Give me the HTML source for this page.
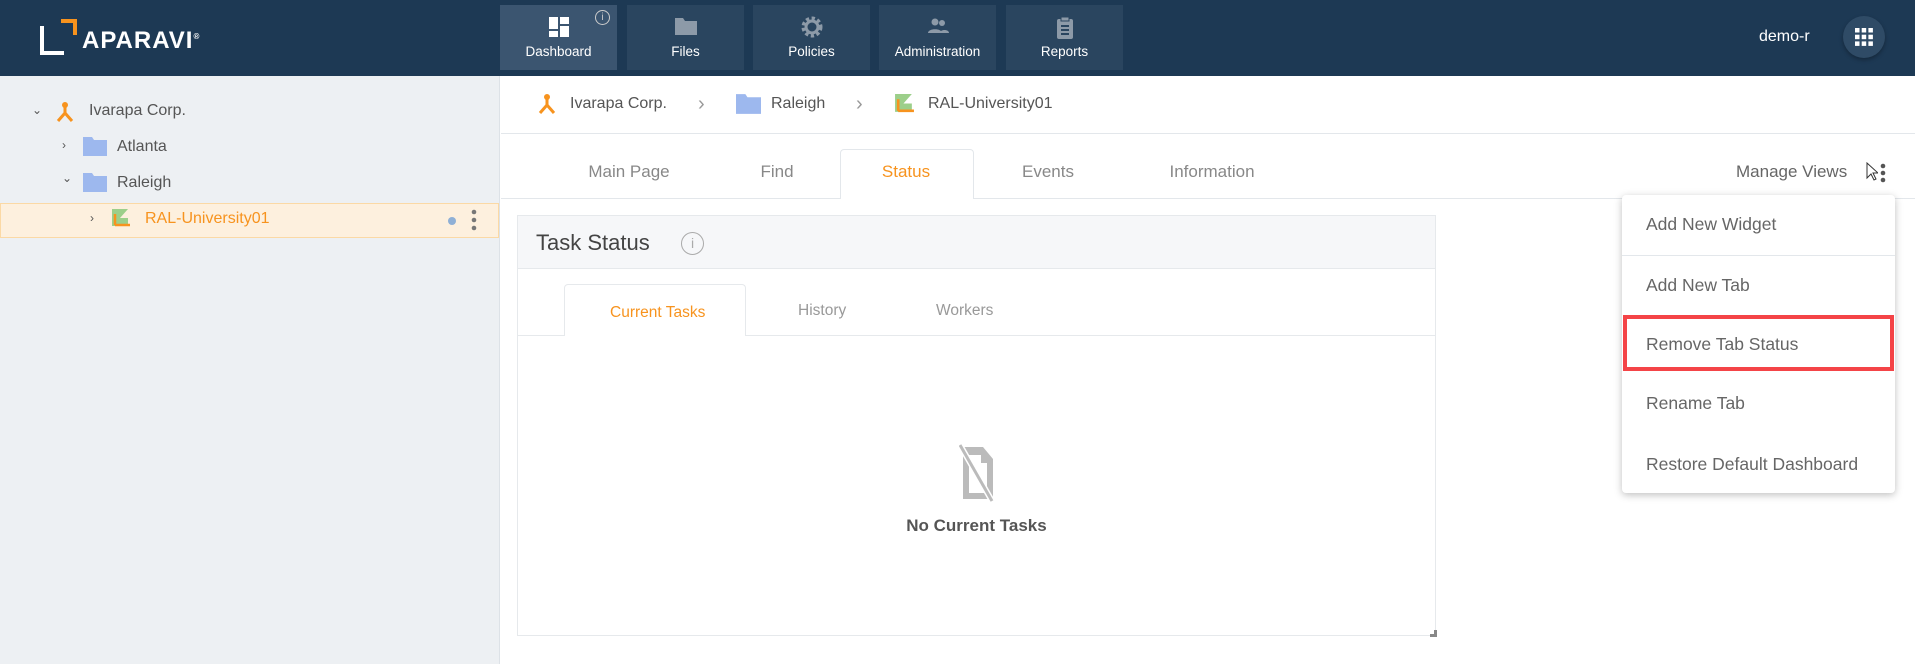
<!DOCTYPE html>
<html><head><meta charset="utf-8"><style>
*{margin:0;padding:0;box-sizing:border-box}
body{width:1915px;height:664px;overflow:hidden;background:#fff;font-family:"Liberation Sans",sans-serif;position:relative;color:#555}
.abs{position:absolute}
#hdr{left:0;top:0;width:1915px;height:76px;background:#1d3954}
.nb{position:absolute;top:5px;height:65px;width:117px;background:#2a455f;color:#fff;font-size:13.5px;text-align:center}
.nb span{position:absolute;left:0;right:0;top:39px}
.nb svg{position:absolute;left:50%;top:11px;transform:translateX(-50%)}
#side{left:0;top:76px;width:500px;height:588px;background:#edf0f3;border-right:1px solid #dde2e7}
.t{position:absolute;font-size:16px;color:#555;white-space:nowrap}
.chev{position:absolute;font-size:12px;color:#555}
.tab{position:absolute;font-size:17px;color:#888;top:162px;transform:translateX(-50%)}
.mi{position:absolute;left:24px;font-size:17.5px;color:#666;white-space:nowrap}
</style></head><body>
<div id="hdr" class="abs">
  <svg class="abs" style="left:39px;top:18px" width="40" height="38" viewBox="0 0 40 38"><path d="M3 8v27h22" fill="none" stroke="#fff" stroke-width="4"/><path d="M22 3h14v14" fill="none" stroke="#f7931e" stroke-width="4"/></svg>
  <div class="abs" style="left:82px;top:27px;color:#fff;font-size:24px;font-weight:bold;letter-spacing:1px">APARAVI<sup style="font-size:8px">®</sup></div>
  <div class="nb" style="left:500px;background:#3b5570"><svg width="22" height="22" viewBox="0 0 22 22"><rect x="1" y="1" width="9" height="12" fill="#fff"/><rect x="12" y="1" width="9" height="7" fill="#fff"/><rect x="12" y="10" width="9" height="11" fill="#fff"/><rect x="1" y="15" width="9" height="6" fill="#fff"/></svg><div class="abs" style="right:7px;top:5px;width:15px;height:15px;border:1.3px solid #ccc;border-radius:50%;font-size:10px;line-height:13px;color:#ccc">i</div><span>Dashboard</span></div>
  <div class="nb" style="left:627px"><svg width="24" height="20" viewBox="0 0 24 20"><path d="M1 2h8l2 3h12v14H1z" fill="#8d9aa8"/></svg><span>Files</span></div>
  <div class="nb" style="left:753px"><svg width="22" height="22" viewBox="0 0 22 22"><circle cx="11" cy="11" r="8" fill="none" stroke="#8d9aa8" stroke-width="5" stroke-dasharray="3 2.3"/><circle cx="11" cy="11" r="6" fill="none" stroke="#8d9aa8" stroke-width="3"/></svg><span>Policies</span></div>
  <div class="nb" style="left:879px"><svg width="24" height="20" viewBox="0 0 24 20"><circle cx="9" cy="6" r="3.5" fill="#8d9aa8"/><circle cx="16" cy="7" r="3" fill="#8d9aa8"/><path d="M2 17c0-5 14-5 14 0zM14 17c0-4 9-4 9 0z" fill="#8d9aa8"/></svg><span>Administration</span></div>
  <div class="nb" style="left:1006px"><svg width="20" height="24" viewBox="0 0 20 24"><rect x="2" y="3" width="16" height="20" rx="2" fill="#8d9aa8"/><rect x="6" y="1" width="8" height="4" fill="#8d9aa8" stroke="#2a455f"/><path d="M6 10h8M6 14h8M6 18h8" stroke="#2a455f" stroke-width="2"/></svg><span>Reports</span></div>
  <div class="abs" style="left:1759px;top:28px;color:#fff;font-size:16px">demo-r</div>
  <div class="abs" style="left:1843px;top:16px;width:42px;height:42px;border-radius:50%;background:#2f4b66;box-shadow:0 2px 4px rgba(0,0,0,.3)"><svg class="abs" style="left:12px;top:12px" width="18" height="18" viewBox="0 0 18 18" fill="#fff"><rect x="0" y="0" width="4.5" height="4.5"/><rect x="6.7" y="0" width="4.5" height="4.5"/><rect x="13.4" y="0" width="4.5" height="4.5"/><rect x="0" y="6.7" width="4.5" height="4.5"/><rect x="6.7" y="6.7" width="4.5" height="4.5"/><rect x="13.4" y="6.7" width="4.5" height="4.5"/><rect x="0" y="13.4" width="4.5" height="4.5"/><rect x="6.7" y="13.4" width="4.5" height="4.5"/><rect x="13.4" y="13.4" width="4.5" height="4.5"/></svg></div>
</div>
<div id="side" class="abs">
  <div class="chev" style="left:32px;top:27px">&#8964;</div>
  <svg class="abs" style="left:55px;top:25px" width="20" height="22" viewBox="0 0 20 22"><circle cx="10" cy="4" r="3" fill="#f7931e"/><path d="M10 5v7L3 20M10 12l7 8" stroke="#f7931e" stroke-width="3" fill="none"/></svg>
  <div class="t" style="left:89px;top:26px">Ivarapa Corp.</div>
  <div class="chev" style="left:62px;top:62px">&#8250;</div>
  <svg class="abs" style="left:83px;top:60px" width="24" height="20" viewBox="0 0 24 20"><path d="M0 1h9l2 3h13v16H0z" fill="#9db8ee"/></svg>
  <div class="t" style="left:117px;top:62px">Atlanta</div>
  <div class="chev" style="left:62px;top:95px">&#8964;</div>
  <svg class="abs" style="left:83px;top:96px" width="24" height="20" viewBox="0 0 24 20"><path d="M0 1h9l2 3h13v16H0z" fill="#9db8ee"/></svg>
  <div class="t" style="left:117px;top:98px">Raleigh</div>
  <div class="abs" style="left:0;top:127px;width:499px;height:35px;background:#fdf0de;border:1px solid #fbd9a5"></div>
  <div class="chev" style="left:90px;top:135px">&#8250;</div>
  <svg class="abs" style="left:111px;top:132px" width="20" height="20" viewBox="0 0 20 20"><path d="M1 1h16l-8 9 8 0v8H1z" fill="#9ccf8a"/><path d="M4 17h15M4 6v11" stroke="#f7931e" stroke-width="2.5"/></svg>
  <div class="t" style="left:145px;top:134px;color:#f7931e">RAL-University01</div>
  <div class="abs" style="left:448px;top:141px;width:8px;height:8px;border-radius:50%;background:#8fb0d6"></div>
  <svg class="abs" style="left:471px;top:133px" width="6" height="22"><circle cx="3" cy="3" r="2.3" fill="#777"/><circle cx="3" cy="11" r="2.3" fill="#777"/><circle cx="3" cy="19" r="2.3" fill="#777"/></svg>
</div>
<svg class="abs" style="left:537px;top:92px" width="20" height="24" viewBox="0 0 20 22"><circle cx="10" cy="4" r="3" fill="#f7931e"/><path d="M10 5v7L3 20M10 12l7 8" stroke="#f7931e" stroke-width="3" fill="none"/></svg>
<div class="t" style="left:570px;top:95px">Ivarapa Corp.</div>
<div class="t" style="left:698px;top:93px;color:#999;font-size:20px">&#8250;</div>
<svg class="abs" style="left:736px;top:93px" width="25" height="21" viewBox="0 0 24 20"><path d="M0 1h9l2 3h13v16H0z" fill="#9db8ee"/></svg>
<div class="t" style="left:771px;top:95px">Raleigh</div>
<div class="t" style="left:856px;top:93px;color:#999;font-size:20px">&#8250;</div>
<svg class="abs" style="left:894px;top:93px" width="21" height="21" viewBox="0 0 20 20"><path d="M1 1h16l-8 9 8 0v8H1z" fill="#9ccf8a"/><path d="M4 17h15M4 6v11" stroke="#f7931e" stroke-width="2.5"/></svg>
<div class="t" style="left:928px;top:95px">RAL-University01</div>
<div class="abs" style="left:501px;top:133px;width:1414px;height:1px;background:#e3e7eb"></div>
<div class="abs" style="left:840px;top:149px;width:134px;height:50px;background:#fff;border:1px solid #e3e7eb;border-bottom:none;border-radius:4px 4px 0 0;z-index:2"></div>
<div class="abs" style="left:501px;top:198px;width:1414px;height:1px;background:#e3e7eb"></div>
<div class="tab" style="left:629px">Main Page</div>
<div class="tab" style="left:777px">Find</div>
<div class="tab" style="left:906px;color:#f7931e;z-index:3">Status</div>
<div class="tab" style="left:1048px">Events</div>
<div class="tab" style="left:1212px">Information</div>
<div class="t" style="left:1736px;top:162px;font-size:17px;color:#666">Manage Views</div>
<svg class="abs" style="left:1866px;top:162px" width="12" height="20" viewBox="0 0 12 20"><path d="M1 1v15l4-4 3 6 2-1-3-6h5z" fill="#fff" stroke="#333" stroke-width="1"/></svg>
<svg class="abs" style="left:1880px;top:163px" width="6" height="20"><circle cx="3" cy="3" r="2.3" fill="#555"/><circle cx="3" cy="10" r="2.3" fill="#555"/><circle cx="3" cy="17" r="2.3" fill="#555"/></svg>
<div class="abs" style="left:517px;top:215px;width:919px;height:421px;border:1px solid #e6e9ec;background:#fff">
  <div class="abs" style="left:0;top:0;width:917px;height:53px;background:#f6f7f9;border-bottom:1px solid #e6e9ec"></div>
  <div class="abs" style="left:18px;top:14px;font-size:22px;color:#444">Task Status</div>
  <div class="abs" style="left:163px;top:16px;width:23px;height:23px;border:1.5px solid #aaa;border-radius:50%;text-align:center;font-size:14px;line-height:20px;color:#aaa">i</div>
  <div class="abs" style="left:0;top:119px;width:917px;height:1px;background:#e6e9ec"></div>
  <div class="abs" style="left:46px;top:68px;width:182px;height:52px;border:1px solid #e6e9ec;border-bottom:none;border-radius:4px 4px 0 0;background:#fff;z-index:3"></div>
  <div class="abs" style="left:92px;top:88px;font-size:15.5px;color:#f7931e;z-index:4">Current Tasks</div>
  <div class="abs" style="left:280px;top:86px;font-size:15.5px;color:#999">History</div>
  <div class="abs" style="left:418px;top:86px;font-size:15.5px;color:#999">Workers</div>
  <svg class="abs" style="left:441px;top:225px" width="36" height="65" viewBox="0 0 36 65"><path d="M4 6h20l10 12v40H4z" fill="#bbb"/><path d="M10 14h12v8h6v30H10z" fill="#fff"/><path d="M1 4l32 56" stroke="#fff" stroke-width="6"/><path d="M1 4l32 56" stroke="#bbb" stroke-width="3"/></svg>
  <div class="abs" style="left:0;width:917px;top:300px;text-align:center;font-size:17px;font-weight:bold;color:#555">No Current Tasks</div>
</div>
<div class="abs" style="left:1430px;top:630px;width:7px;height:7px;border-right:3px solid #888;border-bottom:3px solid #888"></div>
<div class="abs" style="left:1622px;top:195px;width:273px;height:298px;background:#fff;border-radius:4px;box-shadow:0 2px 8px rgba(0,0,0,.25)">
  <div class="mi" style="top:19px">Add New Widget</div>
  <div class="abs" style="left:0;top:60px;width:273px;height:1px;background:#e3e7eb"></div>
  <div class="mi" style="top:80px">Add New Tab</div>
  <div class="abs" style="left:1px;top:120px;width:271px;height:56px;border:4px solid #f44447"></div>
  <div class="mi" style="top:139px">Remove Tab Status</div>
  <div class="mi" style="top:198px">Rename Tab</div>
  <div class="mi" style="top:259px">Restore Default Dashboard</div>
</div>
</body></html>
